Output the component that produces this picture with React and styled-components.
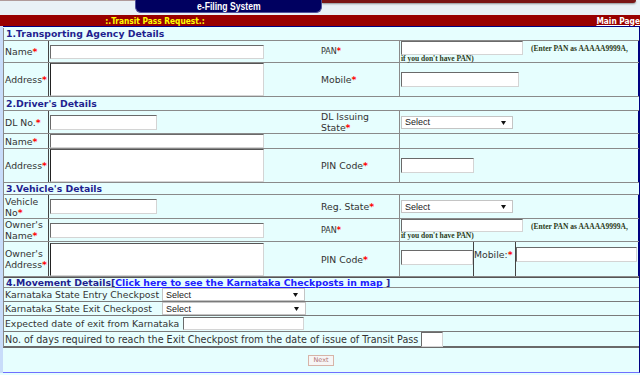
import React from 'react';
import styled, { createGlobalStyle } from 'styled-components';

const GlobalStyle = createGlobalStyle`
  html, body { margin: 0; padding: 0; }
  body { background: #e6fefe; font-family: "DejaVu Sans", Verdana, sans-serif; }
`;

const Page = styled.div`
  width: 640px;
  height: 375px;
  overflow: hidden;
  background: #e6fefe;
`;

const TopStrip = styled.div`
  height: 15px;
  display: flex;
  align-items: flex-start;
  background: #e9f1f6;
`;

const StripLeft = styled.div`
  width: 135px;
  height: 1px;
  background: #b09a9a;
`;

const TitleTab = styled.div`
  width: 187px;
  height: 13px;
  box-sizing: border-box;
  background: #000060;
  border: 1px solid #50509a;
  border-top: none;
  border-radius: 0 0 6px 6px;
  color: #fff;
  font: bold 10.5px "Liberation Sans", Arial, sans-serif;
  line-height: 12px;
  text-align: center;
`;

const Narrow = styled.span`
  display: inline-block;
  transform: scaleX(0.82);
`;

const StripRight = styled.div`
  flex: 1;
  margin-right: 4px;
  height: 3px;
  background: #7a1515;
  border-radius: 0 0 4px 0;
  box-shadow: 0 1px 2px rgba(0, 0, 0, 0.4);
`;

const RedBar = styled.div`
  height: 11px;
  display: flex;
  align-items: center;
  background: #990000;
  font: bold 8.3px "DejaVu Sans Condensed", "DejaVu Sans", sans-serif;
`;

const BarTitle = styled.div`
  width: 310px;
  text-align: center;
  color: #ffff00;
`;

const MainLink = styled.a`
  margin-left: auto;
  color: #fff;
  text-decoration: underline;
`;

const Frame = styled.div`
  display: flex;
  background: #c8dcfa;
  padding-left: 3px;
`;

const Panel = styled.div`
  flex: 1;
  height: 347px;
  box-sizing: border-box;
  background: #e6fefe;
  border-top: 1px solid #000080;
  border-right: 1px solid #000080;
  border-bottom: 1px solid #6f6fff;
  font-size: 9.3px;
  color: #333;
`;

const Form = styled.table`
  width: 100%;
  border-collapse: collapse;
  table-layout: fixed;
  font-size: 9.3px;
  color: #333;
`;

const SectionCell = styled.td`
  height: ${(p) => p.$h}px;
  padding: 0 0 0 2px;
  border-top: 1px solid ${(p) => (p.$first ? '#e6fefe' : '#222')};
  border-bottom: 1px solid #8a8a8a;
  border-left: 1px solid #8a8a8a;
  font-weight: bold;
  color: #1f1f8f;
  line-height: 10px;
  vertical-align: middle;
`;

const Label = styled.td`
  height: ${(p) => p.$h || 0}px;
  padding: 0 0 0 1px;
  border: 1px solid #8a8a8a;
  border-left-color: ${(p) => (p.$side ? '#e6fefe' : '#8a8a8a')};
  border-right-color: ${(p) => (p.$side ? '#8a8a8a' : '#444')};
  font-size: ${(p) => (p.$small ? '8px' : 'inherit')};
  line-height: 11px;
  vertical-align: middle;
  overflow: hidden;
`;

const Field = styled.td`
  padding: 0 0 0 1px;
  border: 1px solid #8a8a8a;
  border-left-color: ${(p) => (p.$side ? '#333' : '#444')};
  border-right-color: ${(p) => (p.$side ? '#000080' : '#e6fefe')};
  vertical-align: ${(p) => (p.$top ? 'top' : 'middle')};
  line-height: 11px;
`;

const Req = styled.span`
  color: #ff0000;
  font-weight: bold;
`;

const TextBox = styled.input`
  display: block;
  box-sizing: border-box;
  width: ${(p) => p.$w}px;
  height: ${(p) => p.$h || 14}px;
  margin: 0;
  padding: 0 2px;
  background: #fff;
  border: 1px solid;
  border-color: #6a6a6a #d4d4d4 #d4d4d4 #6a6a6a;
  font: 9px "Liberation Sans", Arial, sans-serif;
`;

const TextArea = styled.textarea`
  display: block;
  box-sizing: border-box;
  width: 214px;
  height: ${(p) => p.$h}px;
  margin: 0;
  padding: 1px 2px;
  resize: none;
  background: #fff;
  border: 1px solid;
  border-color: #555 #d4d4d4 #d4d4d4 #222;
  font: 9px "Liberation Sans", Arial, sans-serif;
`;

const SelectWrap = styled.div`
  position: relative;
  width: ${(p) => p.$w}px;
  height: 13px;
`;

const Select = styled.select`
  appearance: none;
  width: 100%;
  height: 100%;
  box-sizing: border-box;
  margin: 0;
  padding: 0 0 0 3px;
  background: #fff;
  border: 1px solid #c4c4c4;
  border-radius: 0;
  color: #222;
  font: 9px "Liberation Sans", Arial, sans-serif;
`;

const Arrow = styled.svg`
  position: absolute;
  right: 7px;
  top: 5px;
  pointer-events: none;
`;

const Inline = styled.div`
  display: flex;
  align-items: flex-start;
`;

const Note = styled.div`
  font: bold 7.5px "Liberation Serif", "Times New Roman", serif;
  color: #2d3b1a;
  line-height: ${(p) => p.$lh || 8}px;
  padding-top: ${(p) => p.$pt || 0}px;
  margin-left: ${(p) => p.$ml || 0}px;
`;

const Split = styled.div`
  display: flex;
  align-items: stretch;
  height: 34px;
`;

const SplitCell = styled.div`
  display: flex;
  align-items: flex-start;
  width: ${(p) => p.$w}px;
  box-sizing: border-box;
  border-right: ${(p) => (p.$last ? 'none' : '1px solid #444')};
  padding-top: ${(p) => p.$pt || 0}px;
  padding-left: ${(p) => p.$pl || 0}px;
`;

const MoveHeader = styled.div`
  height: 9px;
  padding-left: 2px;
  border-top: 1px solid #555;
  border-left: 1px solid #8a8a8a;
  border-bottom: 1px solid #8a8a8a;
  font-weight: bold;
  color: #1f1f8f;
  line-height: 9px;
`;

const MapLink = styled.a`
  color: #2020ff;
  text-decoration: underline;
`;

const MoveRow = styled.div`
  display: flex;
  align-items: center;
  height: ${(p) => p.$h}px;
  padding-left: 1px;
  border-left: 1px solid #8a8a8a;
  border-bottom: ${(p) => (p.$last ? '2px solid #6a6a6a' : '1px solid #7a7a7a')};
  font-size: ${(p) => p.$fs || 9.3}px;
  white-space: nowrap;
`;

const Gap = styled.span`
  display: inline-block;
  width: ${(p) => p.$w}px;
`;

const ButtonBar = styled.div`
  display: flex;
  justify-content: center;
  padding-top: 7px;
`;

const NextButton = styled.button`
  width: 26px;
  height: 11px;
  padding: 0;
  background: #f6f6f6;
  border: 1px solid #d7b4a8;
  color: #b07070;
  font: 6.5px "DejaVu Sans", Verdana, sans-serif;
  line-height: 9px;
`;

const ArrowIcon = () => (
  <Arrow width="5" height="4" viewBox="0 0 5 4">
    <path d="M0 0 H5 L2.5 4 Z" fill="#111" />
  </Arrow>
);

const Dropdown = ({ w }) => (
  <SelectWrap $w={w}>
    <Select defaultValue="">
      <option value="">Select</option>
    </Select>
    <ArrowIcon />
  </SelectWrap>
);

const PanField = ({ h }) => (
  <Field $side $top>
    <Inline>
      <TextBox $w={122} $h={h} />
      <Note $pt={4} $ml={8}>(Enter PAN as AAAAA9999A,</Note>
    </Inline>
    <Note $lh={7}>if you don't have PAN)</Note>
  </Field>
);

export default function App() {
  return (
    <Page>
      <GlobalStyle />
      <TopStrip>
        <StripLeft />
        <TitleTab><Narrow>e-Filing System</Narrow></TitleTab>
        <StripRight />
      </TopStrip>
      <RedBar>
        <BarTitle>:.Transit Pass Request.:</BarTitle>
        <MainLink href="#">Main Page</MainLink>
      </RedBar>
      <Frame>
        <Panel>
          <Form>
            <colgroup>
              <col style={{ width: 45 }} />
              <col style={{ width: 271 }} />
              <col style={{ width: 80 }} />
              <col />
            </colgroup>
            <tbody>
              <tr>
                <SectionCell colSpan={4} $h={12} $first>1.Transporting Agency Details</SectionCell>
              </tr>
              <tr>
                <Label $h={21}>Name<Req>*</Req></Label>
                <Field><TextBox $w={214} /></Field>
                <Label $side $small>PAN<Req>*</Req></Label>
                <PanField h={14} />
              </tr>
              <tr>
                <Label $h={33}>Address<Req>*</Req></Label>
                <Field><TextArea $h={33} /></Field>
                <Label $side>Mobile<Req>*</Req></Label>
                <Field $side><TextBox $w={118} $h={15} /></Field>
              </tr>
              <tr>
                <SectionCell colSpan={4} $h={13}>2.Driver's Details</SectionCell>
              </tr>
              <tr>
                <Label $h={22}>DL No.<Req>*</Req></Label>
                <Field><TextBox $w={107} $h={15} /></Field>
                <Label $side>DL Issuing State<Req>*</Req></Label>
                <Field $side><Dropdown w={112} /></Field>
              </tr>
              <tr>
                <Label $h={14}>Name<Req>*</Req></Label>
                <Field><TextBox $w={214} $h={14} /></Field>
                <Label $side />
                <Field $side style={{ borderLeftColor: '#e6fefe' }} />
              </tr>
              <tr>
                <Label $h={33}>Address<Req>*</Req></Label>
                <Field><TextArea $h={33} /></Field>
                <Label $side>PIN Code<Req>*</Req></Label>
                <Field $side><TextBox $w={73} $h={15} /></Field>
              </tr>
              <tr>
                <SectionCell colSpan={4} $h={11}>3.Vehicle's Details</SectionCell>
              </tr>
              <tr>
                <Label $h={23}>Vehicle No<Req>*</Req></Label>
                <Field><TextBox $w={107} $h={15} /></Field>
                <Label $side>Reg. State<Req>*</Req></Label>
                <Field $side><Dropdown w={112} /></Field>
              </tr>
              <tr>
                <Label $h={20}>Owner's Name<Req>*</Req></Label>
                <Field><TextBox $w={214} $h={15} /></Field>
                <Label $side $small>PAN<Req>*</Req></Label>
                <PanField h={13} />
              </tr>
              <tr>
                <Label $h={34}>Owner's Address<Req>*</Req></Label>
                <Field><TextArea $h={33} /></Field>
                <Label $side>PIN Code<Req>*</Req></Label>
                <Field $side style={{ padding: 0 }}>
                  <Split>
                    <SplitCell $w={74} $pt={8} $pl={1}>
                      <TextBox $w={72} $h={15} />
                    </SplitCell>
                    <SplitCell $w={42} $pt={7}>Mobile:<Req>*</Req></SplitCell>
                    <SplitCell $w={122} $pt={5} $last>
                      <TextBox $w={121} $h={15} />
                    </SplitCell>
                  </Split>
                </Field>
              </tr>
            </tbody>
          </Form>
          <MoveHeader>
            4.Movement Details[<MapLink href="#">Click here to see the Karnataka Checkposts in map</MapLink> ]
          </MoveHeader>
          <MoveRow $h={13}>
            Karnataka State Entry Checkpost<Gap $w={3} />
            <Dropdown w={143} />
          </MoveRow>
          <MoveRow $h={13}>
            Karnataka State Exit Checkpost<Gap $w={10} />
            <Dropdown w={144} />
          </MoveRow>
          <MoveRow $h={15}>
            Expected date of exit from Karnataka<Gap $w={4} />
            <TextBox $w={121} $h={13} />
          </MoveRow>
          <MoveRow $h={14} $last $fs={9.6}>
            No. of days required to reach the Exit Checkpost from the date of issue of Transit Pass<Gap $w={3} />
            <TextBox $w={22} $h={15} />
          </MoveRow>
          <ButtonBar>
            <NextButton type="button">Next</NextButton>
          </ButtonBar>
        </Panel>
      </Frame>
    </Page>
  );
}
